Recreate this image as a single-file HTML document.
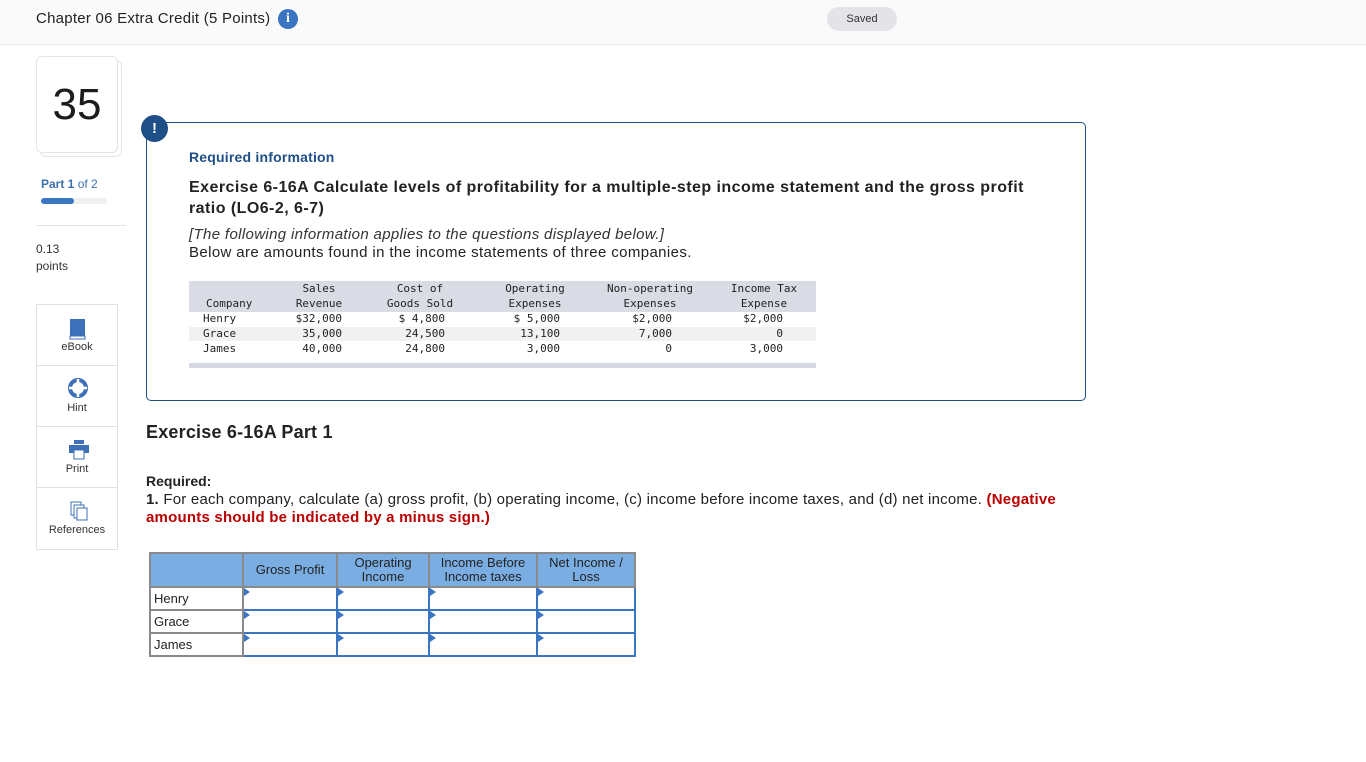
<!DOCTYPE html>
<html><head><meta charset="utf-8"><style>
*{margin:0;padding:0;box-sizing:border-box}
body{width:1366px;height:762px;background:#fff;font-family:"Liberation Sans",sans-serif;color:#222;position:relative;overflow:hidden}
.a{position:absolute;white-space:nowrap}
.m{font-family:"DejaVu Sans Mono","Liberation Mono",monospace;font-size:11px;color:#222;line-height:15px}
.r{text-align:right}.c{text-align:center}
.side{position:absolute;left:36px;width:82px;border:1px solid #e2e2e2;font-size:11px;color:#333;text-align:center}
.side div{height:61px;border-bottom:1px solid #e2e2e2;position:relative}
.side span{position:absolute;left:0;right:0;top:36px}
table.ans{position:absolute;left:149px;top:552px;border-collapse:collapse;font-size:13px}
table.ans td{border:2px solid #8a8a8a;height:23px;padding:0 3px;position:relative}
table.ans tr.h td{background:#7aaee3;height:34px;text-align:center;line-height:14px;color:#222}
table.ans td.i{border:2px solid #3a75c4;background:#fff}
table.ans td.i:before{content:"";position:absolute;left:0;top:0;border-left:6px solid #3a75c4;border-top:4px solid transparent;border-bottom:4px solid transparent}
</style></head><body>
<div class="a" style="left:0;top:0;width:1366px;height:45px;background:#fafafa;border-bottom:1px solid #ececec"></div>
<div class="a" style="left:36px;top:10px;font-size:15px;color:#222;letter-spacing:0.25px">Chapter 06 Extra Credit (5 Points)</div>
<div class="a" style="left:278px;top:9px;width:20px;height:20px;border-radius:50%;background:#3a73c0;color:#fff;font-weight:bold;font-size:14px;text-align:center;line-height:20px;font-family:'Liberation Serif',serif">i</div>
<div class="a" style="left:827px;top:7px;width:70px;height:24px;border-radius:12px;background:#e4e3e7;font-size:11px;text-align:center;line-height:24px;color:#333">Saved</div>

<div class="a" style="left:40px;top:60px;width:82px;height:97px;border:1px solid #e4e4e4;border-radius:6px"></div>
<div class="a" style="left:36px;top:56px;width:82px;height:97px;border:1px solid #e4e4e4;border-radius:6px;background:#fff;font-size:44px;text-align:center;line-height:95px;color:#1c1c1c">35</div>
<div class="a" style="left:41px;top:177px;font-size:12px;color:#3c6fb0"><b>Part 1</b> of 2</div>
<div class="a" style="left:41px;top:198px;width:66px;height:6px;border-radius:3px;background:#f0f0f0"></div>
<div class="a" style="left:41px;top:198px;width:33px;height:6px;border-radius:3px;background:#3a78c5"></div>
<div class="a" style="left:36px;top:225px;width:90px;height:1px;background:#e4e4e4"></div>
<div class="a" style="left:36px;top:241px;font-size:12px;color:#333;line-height:17px">0.13<br>points</div>
<div class="side" style="top:304px">
<div><svg style="position:absolute;left:32px;top:13px" width="18" height="22"><rect x="1" y="1" width="15" height="17" fill="#3d70b8"/><rect x="1" y="18" width="15" height="3" fill="#fff" stroke="#3d70b8"/></svg><span>eBook</span></div>
<div><svg style="position:absolute;left:31px;top:12px" width="20" height="20"><circle cx="10" cy="10" r="8" fill="none" stroke="#3d70b8" stroke-width="4"/><path d="M10 1v5M10 14v5M1 10h5M14 10h5" stroke="#fff" stroke-width="2.5"/></svg><span>Hint</span></div>
<div><svg style="position:absolute;left:32px;top:13px" width="20" height="20"><rect x="5" y="0" width="10" height="4" fill="#3d70b8"/><rect x="0" y="5" width="20" height="8" fill="#3d70b8"/><rect x="5" y="10" width="10" height="9" fill="#fff" stroke="#3d70b8"/></svg><span>Print</span></div>
<div style="border-bottom:0"><svg style="position:absolute;left:33px;top:13px" width="18" height="20"><rect x="1" y="1" width="10" height="13" fill="#fff" stroke="#3d70b8"/><rect x="4" y="4" width="10" height="13" fill="#fff" stroke="#3d70b8"/><rect x="7" y="7" width="10" height="12" fill="#fff" stroke="#3d70b8"/></svg><span>References</span></div>
</div>

<div class="a" style="left:146px;top:122px;width:940px;height:279px;border:1px solid #1e4f86;border-radius:5px"></div>
<div class="a" style="left:141px;top:115px;width:27px;height:27px;border-radius:50%;background:#1e4f86;color:#fff;font-weight:bold;text-align:center;line-height:27px;font-size:15px">!</div>
<div class="a" style="left:189px;top:149px;font-size:14px;font-weight:bold;color:#1e4f86;letter-spacing:0.2px">Required information</div>
<div class="a" style="left:189px;top:177px;font-size:16px;font-weight:bold;color:#222;line-height:21px;letter-spacing:0.45px">Exercise 6-16A Calculate levels of profitability for a multiple-step income statement and the gross profit<br>ratio (LO6-2, 6-7)</div>
<div class="a" style="left:189px;top:226px;font-size:15px;font-style:italic;color:#333;letter-spacing:0.35px">[The following information applies to the questions displayed below.]</div>
<div class="a" style="left:189px;top:244px;font-size:15px;color:#222;letter-spacing:0.38px">Below are amounts found in the income statements of three companies.</div>

<div class="a" style="left:189px;top:281px;width:627px;height:31px;background:#d9dce5"></div>
<div class="a" style="left:189px;top:327px;width:627px;height:14px;background:#f1f1f1"></div>
<div class="a" style="left:189px;top:363px;width:627px;height:5px;background:#d5d8e0"></div>
<div class="a m" style="left:206px;top:296px">Company</div>
<div class="a m" style="left:203px;top:311px;line-height:15px">Henry<br>Grace<br>James</div>
<div class="a m c" style="left:284px;width:70px;top:281px">Sales<br>Revenue</div>
<div class="a m r" style="left:270px;width:72px;top:311px">$32,000<br>35,000<br>40,000</div>
<div class="a m c" style="left:375px;width:90px;top:281px">Cost of<br>Goods Sold</div>
<div class="a m r" style="left:370px;width:75px;top:311px">$ 4,800<br>24,500<br>24,800</div>
<div class="a m c" style="left:490px;width:90px;top:281px">Operating<br>Expenses</div>
<div class="a m r" style="left:480px;width:80px;top:311px">$ 5,000<br>13,100<br>3,000</div>
<div class="a m c" style="left:595px;width:110px;top:281px">Non-operating<br>Expenses</div>
<div class="a m r" style="left:590px;width:82px;top:311px">$2,000<br>7,000<br>0</div>
<div class="a m c" style="left:719px;width:90px;top:281px">Income Tax<br>Expense</div>
<div class="a m r" style="left:700px;width:83px;top:311px">$2,000<br>0<br>3,000</div>

<div class="a" style="left:146px;top:422px;font-size:18px;font-weight:bold;color:#222;letter-spacing:0.2px">Exercise 6-16A Part 1</div>
<div class="a" style="left:146px;top:473px;font-size:14px;font-weight:bold">Required:</div>
<div class="a" style="left:146px;top:491px;font-size:15px;line-height:18px;color:#222;letter-spacing:0.22px"><b>1.</b> For each company, calculate (a) gross profit, (b) operating income, (c) income before income taxes, and (d) net income. <b style="color:#b00">(Negative<br>amounts should be indicated by a minus sign.)</b></div>

<table class="ans">
<tr class="h"><td style="width:93px"></td><td style="width:94px">Gross Profit</td><td style="width:92px">Operating<br>Income</td><td style="width:108px">Income Before<br>Income taxes</td><td style="width:98px">Net Income /<br>Loss</td></tr>
<tr><td>Henry</td><td class="i"></td><td class="i"></td><td class="i"></td><td class="i"></td></tr>
<tr><td>Grace</td><td class="i"></td><td class="i"></td><td class="i"></td><td class="i"></td></tr>
<tr><td>James</td><td class="i"></td><td class="i"></td><td class="i"></td><td class="i"></td></tr>
</table>
</body></html>
